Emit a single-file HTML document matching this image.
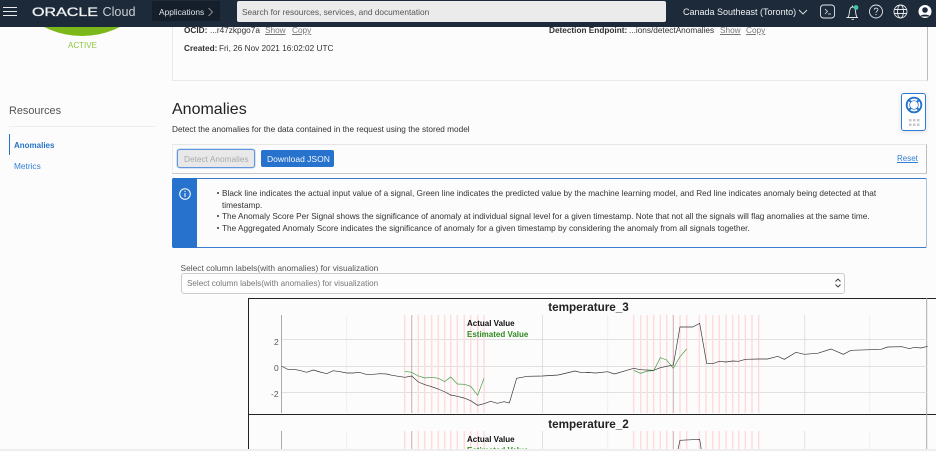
<!DOCTYPE html>
<html lang="en"><head><meta charset="utf-8"><title>Anomalies</title>
<style>
html,body{margin:0;padding:0;background:#fcfcfc}
body{width:936px;height:450px;overflow:hidden;position:relative;font-family:"Liberation Sans",Arial,sans-serif;color:#333}
#w{position:absolute;inset:0;filter:blur(.35px)}
.a{position:absolute}
.t{position:absolute;white-space:nowrap;line-height:12px;font-size:8.24px}
.b{font-weight:bold}
.l{text-decoration:underline;color:#777}
</style></head><body><div id="w">
<svg class="a" style="left:0;top:0" width="936" height="80"><circle cx="82" cy="-49" r="85" fill="#7db81b"/></svg>
<div class="t" style="left:68px;top:40px;color:#8cc63f;font-size:8px">ACTIVE</div>
<div class="a" style="left:172px;top:20px;width:754px;height:60px;border:1px solid #e9e9e9;border-right-color:#bbb;border-top:0"></div>
<div class="t b" style="left:184px;top:25px">OCID:</div>
<div class="t" style="left:210px;top:25px">...r47zkpgo7a</div>
<div class="t l" style="left:265px;top:25px">Show</div><div class="t l" style="left:292px;top:25px">Copy</div>
<div class="t b" style="left:184px;top:43px">Created:</div>
<div class="t" style="left:219px;top:43px">Fri, 26 Nov 2021 16:02:02 UTC</div>
<div class="t b" style="left:549px;top:24.500px">Detection Endpoint:</div>
<div class="t" style="left:629px;top:25px">...ions/detectAnomalies</div>
<div class="t l" style="left:720px;top:25px">Show</div><div class="t l" style="left:746px;top:25px">Copy</div>

<div class="a" style="left:0;top:0;width:936px;height:27px;background:#1c2a3a"></div>
<div class="a" style="left:3px;top:7px;width:14px;height:1px;background:#e8ebee"></div>
<div class="a" style="left:3px;top:11px;width:14px;height:1px;background:#e8ebee"></div>
<div class="a" style="left:3px;top:15px;width:14px;height:1px;background:#e8ebee"></div>
<svg class="a" style="left:0;top:0" width="936" height="27" font-family="Liberation Sans">
<text x="32" y="16" font-size="12" fill="#f2f2f2" stroke="#f2f2f2" stroke-width=".3" textLength="66" lengthAdjust="spacingAndGlyphs">ORACLE</text>
<text x="102.500" y="16" font-size="12.500" fill="#c9ced3" textLength="33" lengthAdjust="spacingAndGlyphs">Cloud</text>
</svg>
<div class="a" style="left:152px;top:1px;width:68px;height:20px;background:#141f2b"></div>
<div class="t" style="left:159px;top:6px;color:#dfe3e6;font-size:8.400px">Applications</div>
<svg class="a" style="left:207px;top:7px" width="8" height="10"><path d="M1.500 1l4 4-4 4" fill="none" stroke="#a8afb7" stroke-width=".8"/></svg>
<div class="a" style="left:237px;top:1px;width:429px;height:21px;background:#ebebeb;border-radius:2px"></div>
<div class="t" style="left:242px;top:6px;color:#555;font-size:8.300px">Search for resources, services, and documentation</div>
<div class="t" style="left:683px;top:6px;color:#f0f2f4;font-size:9px">Canada Southeast (Toronto)</div>
<svg class="a" style="left:0;top:0" width="936" height="27" fill="none" stroke="#e6e9ec">
<path d="M799 10l4 4 4-4" stroke-width=".9"/>
<rect x="820.500" y="5" width="14" height="13" rx="3" stroke-width=".9"/><path d="M825 9l2.500 2.500-2.500 2.500M828 14h3" stroke-width=".8"/>
<path d="M846.500 17.500h11.500M848 17.500c1.500-2.500 1.200-4.500 1.700-7 .4-2.300 1.700-3.500 2.800-3.500 1.600 0 2.800 1.300 3 3.500.2 2.500.2 4.500 1.500 7M851.500 19.300h2.500M852.500 7V5.500" stroke-width=".9"/>
<circle cx="856" cy="7.500" r="2.400" fill="#3fc3a4" stroke="none"/>
<circle cx="876" cy="11.500" r="6.500" stroke-width=".9"/>
<path d="M874.200 9.800c.2-2.300 3.700-2.300 3.700-.1 0 1.400-1.900 1.500-1.900 3" stroke-width=".8"/><circle cx="876" cy="14.500" r=".6" fill="#e6e9ec" stroke="none"/>
<g stroke-width=".9"><circle cx="900.500" cy="11.500" r="6.500"/><ellipse cx="900.500" cy="11.500" rx="3" ry="6.500"/><path d="M894 9.500h13M894 13.500h13"/></g>
<circle cx="925" cy="11.500" r="6.500" fill="#fff" stroke="none"/>
<circle cx="925" cy="10" r="2.800" fill="#1c2a3a" stroke="none"/><path d="M920 16.500c1-2.500 9-2.500 10 0" fill="#1c2a3a" stroke="none"/>
</svg>

<div class="t" style="left:9px;top:105px;color:#555;font-size:10.900px">Resources</div>
<div class="a" style="left:9px;top:126px;width:146px;height:1px;background:#eee"></div>
<div class="a" style="left:9px;top:134px;width:1px;height:21px;background:#2672c8"></div>
<div class="t b" style="left:14px;top:140px;color:#2672c8;font-size:8px">Anomalies</div>
<div class="t" style="left:14px;top:160px;color:#2f7fd6;font-size:8.300px">Metrics</div>

<div class="t" style="left:172px;top:101px;color:#222;font-size:16px;line-height:18px">Anomalies</div>
<div class="t" style="left:172px;top:124px;color:#333;font-size:8.250px">Detect the anomalies for the data contained in the request using the stored model</div>

<div class="a" style="left:172px;top:144px;width:753px;height:28px;border:1px solid #e6e6e6;border-bottom-color:#c8c8c8;border-right-color:#bbb;border-left-color:#eee"></div>
<div class="a" style="left:177px;top:149px;width:76px;height:17px;background:#e8e8e8;border:1px solid #5f97dc;border-radius:3px;box-shadow:0 0 0 .5px #a9c6ec"></div>
<div class="t" style="left:184px;top:153px;color:#aaa;font-size:8.300px">Detect Anomalies</div>
<div class="a" style="left:261px;top:150px;width:73px;height:17px;background:#2672cc;border-radius:2px"></div>
<div class="t" style="left:267px;top:153px;color:#f2f6fb;font-size:8.500px">Download JSON</div>
<div class="t" style="left:897px;top:153px;color:#2f7fd6;text-decoration:underline;font-size:8px">Reset</div>

<div class="a" style="left:172px;top:178px;width:753px;height:68px;border:1px solid #3a7bcd;border-right-color:#a9bfdc;border-radius:2px"></div>
<div class="a" style="left:172px;top:178px;width:25px;height:70px;background:#2672cc;border-radius:2px 0 0 2px"></div>
<svg class="a" style="left:178px;top:187px" width="14" height="14" fill="none" stroke="#fff"><circle cx="7" cy="7" r="5.300"/><path d="M7 6v4M7 3.800v1.200"/></svg>
<div class="a" style="left:217px;top:192px;width:2px;height:2px;border-radius:50%;background:#333"></div>
<div class="a" style="left:217px;top:215px;width:2px;height:2px;border-radius:50%;background:#333"></div>
<div class="a" style="left:217px;top:227px;width:2px;height:2px;border-radius:50%;background:#333"></div>
<div class="t" style="left:222px;top:188px">Black line indicates the actual input value of a signal, Green line indicates the predicted value by the machine learning model, and Red line indicates anomaly being detected at that</div>
<div class="t" style="left:222px;top:200px">timestamp.</div>
<div class="t" style="left:222px;top:211px">The Anomaly Score Per Signal shows the significance of anomaly at individual signal level for a given timestamp. Note that not all the signals will flag anomalies at the same time.</div>
<div class="t" style="left:222px;top:223px">The Aggregated Anomaly Score indicates the significance of anomaly for a given timestamp by considering the anomaly from all signals together.</div>

<div class="t" style="left:180.500px;top:262px;color:#555;font-size:8.400px">Select column labels(with anomalies) for visualization</div>
<div class="a" style="left:181px;top:273px;width:662px;height:19px;border:1px solid #ccc;border-radius:3px;background:#fdfdfd"></div>
<div class="t" style="left:187px;top:278px;color:#777;font-size:8.100px">Select column labels(with anomalies) for visualization</div>
<svg class="a" style="left:833px;top:277px" width="10" height="12" fill="none" stroke="#333" stroke-width=".9"><path d="M2.500 4.500L5 2l2.500 2.500M2.500 7.500L5 10l2.500-2.500"/></svg>

<svg class="a" style="left:0;top:0" width="936" height="450" font-family="Liberation Sans">
<defs><clipPath id="c1"><rect x="249" y="299" width="687" height="115"/></clipPath><clipPath id="c2"><rect x="249" y="415" width="687" height="34"/></clipPath></defs>
<path d="M248.500 298v152M248 298.500h688M248 414.500h688" stroke="#222" fill="none"/>
<path d="M926.700 298v152" stroke="#aaa"/>
<text x="588.500" y="311" font-size="11.700" font-weight="bold" fill="#222" text-anchor="middle">temperature_3</text>
<text x="588.500" y="428" font-size="11.700" font-weight="bold" fill="#222" text-anchor="middle">temperature_2</text>
<g fill="none" stroke="#efefef">
<path d="M346.700 315v98M607.700 315v98M869.700 315v98M346.700 431v18M607.700 431v18M869.700 431v18"/>
</g>
<g fill="none" stroke="#e0e0e0">
<path d="M542.500 315v98M804.700 315v98M542.500 431v18M804.700 431v18M281 339.500h646M281 366.500h646M281 392.500h646"/>
</g>
<path d="M281.500 315v98M281.500 431v18" stroke="#aaa"/>
<g stroke="#ffdcdc" stroke-width="1.500" fill="none">
<path d="M404.700 315v98M418.300 315v98M424.700 315v98M431.700 315v98M438.300 315v98M444.700 315v98M450.700 315v98M457.300 315v98M464.300 315v98M470.700 315v98M477.700 315v98M484 315v98M633.700 315v98M640.700 315v98M647.300 315v98M653.700 315v98M660.300 315v98M666.700 315v98M680 315v98M686.700 315v98M699.300 315v98M706 315v98M712.700 315v98M719.300 315v98M726 315v98M732.700 315v98M738.700 315v98M745.300 315v98M752 315v98M758.700 315v98"/>
<path d="M404.700 431v18M418.300 431v18M424.700 431v18M431.700 431v18M438.300 431v18M444.700 431v18M450.700 431v18M457.300 431v18M464.300 431v18M470.700 431v18M477.700 431v18M484 431v18M633.700 431v18M640.700 431v18M647.300 431v18M653.700 431v18M660.300 431v18M666.700 431v18M680 431v18M686.700 431v18M699.300 431v18M706 431v18M712.700 431v18M719.300 431v18M726 431v18M732.700 431v18M738.700 431v18M745.300 431v18M752 431v18M758.700 431v18"/>
</g>
<path d="M411.700 315v98M673.300 315v98M411.700 431v18M673.300 431v18" stroke="#d4b4b4" stroke-width="1.100"/>
<g font-size="8.500" fill="#555"><text x="274" y="345">2</text><text x="274" y="371">0</text><text x="271" y="397">-2</text></g>
<g clip-path="url(#c1)" fill="none">
<g transform="translate(240 295) scale(.33333)" stroke-width="2">
<polyline stroke="#333" points="124,213 143,223 163,223 182,227 200,232 220,225 240,231 260,236 280,227 300,230 320,234 340,234 358,232 378,238 400,238 420,236 440,237 456,241 475,244 495,247 515,243 535,261 555,269 575,275 595,282 615,291 632,300 652,304 672,309 692,317 713,331 732,326 752,319 772,325 792,320 808,324 830,250 862,244 907,243 955,240 1005,228 1025,233 1050,232"/>
<polyline stroke="#3f9a3f" points="494,229 515,232 535,243 555,249 575,247 595,250 614,260 632,246 652,267 673,268 692,274 713,301 732,250"/>
</g>
<g transform="translate(586 295) scale(.33333)" stroke-width="2">
<polyline stroke="#333" points="0,232 30,234 65,230 85,237 143,220 163,224 203,226 223,218 262,210 282,96 320,96 341,85 362,205 380,206 400,199 420,201 440,198 458,199 478,193 518,192 545,192 575,184 595,193 630,172 655,178 695,175 735,162 772,178 795,166 855,164 885,163 905,156 948,155 970,161 985,157 1005,159 1025,154"/>
<polyline stroke="#3f9a3f" points="143,226 164,235 184,228 203,227 223,188 242,195 262,220 282,185 302,162"/>
</g>
</g>
<g clip-path="url(#c2)" fill="none">
<g transform="translate(586 295) scale(.33333)" stroke-width="2"><polyline stroke="#333" points="270,490 282,436 341,433 350,490"/></g>
</g>
<g font-size="8" font-weight="bold">
<text x="467" y="326" fill="#111">Actual Value</text><text x="467" y="337" fill="#2e8b1e">Estimated Value</text>
<text x="467" y="442" fill="#111">Actual Value</text><text x="467" y="453" fill="#2e8b1e">Estimated Value</text>
</g>
</svg>
<div class="a" style="left:0;top:448.500px;width:936px;height:2px;background:#eee"></div>

<div class="a" style="left:901px;top:93px;width:23px;height:36px;border:1px solid #2f7ad6;border-radius:3px;background:#fff;box-shadow:0 1px 5px rgba(0,0,0,.12)"></div>
<svg class="a" style="left:901px;top:93px" width="26" height="38" fill="none">
<circle cx="13" cy="12" r="7.300" stroke="#2672cc" stroke-width="1.900"/>
<circle cx="13" cy="12" r="4.300" stroke="#2672cc" stroke-width=".7"/>
<path d="M9.900 8.900L8 7M16.100 8.900L18 7M9.900 15.100L8 17M16.100 15.100L18 17" stroke="#2672cc" stroke-width="2"/>
<g fill="#c4c8cc"><rect x="8" y="26" width="2.500" height="2.500"/><rect x="12" y="26" width="2.500" height="2.500"/><rect x="16" y="26" width="2.500" height="2.500"/><rect x="8" y="30.500" width="2.500" height="2.500"/><rect x="12" y="30.500" width="2.500" height="2.500"/><rect x="16" y="30.500" width="2.500" height="2.500"/></g>
</svg>
</div></body></html>
